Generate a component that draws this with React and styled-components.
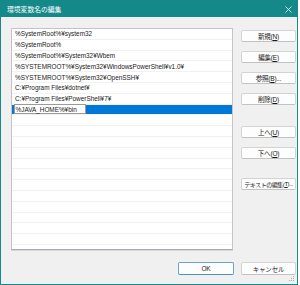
import React from 'react';
import styled, { createGlobalStyle } from 'styled-components';

const GlobalStyle = createGlobalStyle`
    html, body {
        margin: 0;
        padding: 0;
        background: #ffffff;
    }
    body {
        font-family: "Liberation Sans", "Noto Sans CJK JP", sans-serif;
    }
`;

const paths = [
    '%SystemRoot%¥system32',
    '%SystemRoot%',
    '%SystemRoot%¥System32¥Wbem',
    '%SYSTEMROOT%¥System32¥WindowsPowerShell¥v1.0¥',
    '%SYSTEMROOT%¥System32¥OpenSSH¥',
    'C:¥Program Files¥dotnet¥',
    'C:¥Program Files¥PowerShell¥7¥',
];

const sideButtons = [
    { label: '新規', key: 'N', gap: 0 },
    { label: '編集', key: 'E', gap: 9 },
    { label: '参照', key: 'B', gap: 9, dots: true },
    { label: '削除', key: 'D', gap: 9 },
    { label: '上へ', key: 'U', gap: 21 },
    { label: '下へ', key: 'O', gap: 9 },
    { label: 'テキストの編集', key: 'T', gap: 19, dots: true, tight: true },
];

const App = () => {
    const emptyRows = Array.from({ length: 13 });
    return (
        <>
            <GlobalStyle />
            <Window>
                <TitleBar>
                    <span className="title">環境変数名の編集</span>
                    <svg width="7" height="7" viewBox="0 0 7 7">
                        <path d="M0.5 0.5 L6.5 6.5 M6.5 0.5 L0.5 6.5" stroke="#d8eeee" strokeWidth="0.9" />
                    </svg>
                </TitleBar>
                <Body>
                    <Main>
                        <List>
                            {paths.map((p) => (
                                <Row key={p}>{p}</Row>
                            ))}
                            <Row $selected>
                                <EditBox>%JAVA_HOME%¥bin</EditBox>
                            </Row>
                            {emptyRows.map((_, i) => (
                                <Row key={i} />
                            ))}
                        </List>
                        <Side>
                            {sideButtons.map(({ label, key, gap, dots, tight }) => (
                                <Button key={key} $gap={gap} $tight={tight}>
                                    {label}(<u>{key}</u>){dots ? '...' : ''}
                                </Button>
                            ))}
                        </Side>
                    </Main>
                    <Footer>
                        <Button $primary $wide>OK</Button>
                        <Button>キャンセル</Button>
                    </Footer>
                </Body>
                <Grip viewBox="0 0 6 6">
                    <rect x="4" y="0" width="1" height="1" fill="#a9a9a9" />
                    <rect x="2" y="2" width="1" height="1" fill="#a9a9a9" />
                    <rect x="4" y="2" width="1" height="1" fill="#a9a9a9" />
                    <rect x="0" y="4" width="1" height="1" fill="#a9a9a9" />
                    <rect x="2" y="4" width="1" height="1" fill="#a9a9a9" />
                    <rect x="4" y="4" width="1" height="1" fill="#a9a9a9" />
                </Grip>
            </Window>
        </>
    );
};

export default App;

const Window = styled.div`
    position: relative;
    width: 298px;
    height: 285px;
    box-sizing: border-box;
    display: flex;
    flex-direction: column;
    border: 1px solid #15898a;
    border-top: none;
    background: #f0f0f0;
`;

const TitleBar = styled.div`
    height: 17px;
    margin: 0 -1px;
    padding: 0 6px 0 7px;
    background: #15898a;
    display: flex;
    align-items: center;
    justify-content: space-between;
    .title {
        color: #ffffff;
        font-family: "Noto Sans CJK JP", sans-serif;
        font-size: 6.8px;
        line-height: 1;
        padding-top: 1px;
    }
    svg {
        display: block;
        margin-top: 1px;
    }
`;

const Body = styled.div`
    flex: 1;
    display: flex;
    flex-direction: column;
    padding: 11px 1px 0 10px;
`;

const Main = styled.div`
    display: flex;
    gap: 8px;
    height: 222px;
`;

const List = styled.div`
    width: 222px;
    box-sizing: border-box;
    background: #ffffff;
    border: 1px solid #c4c4c4;
    border-bottom-color: #a9a9b4;
    box-shadow: 0 1px 0 #d6d6dc;
    overflow: hidden;
    display: flex;
    flex-direction: column;
`;

const Row = styled.div`
    flex: 0 0 10.8px;
    height: 10.8px;
    box-sizing: border-box;
    border-bottom: 1px solid #f1f1f1;
    padding-left: 3px;
    display: flex;
    align-items: center;
    font-size: 6.4px;
    color: #1a1a1a;
    white-space: nowrap;
    background: ${({ $selected }) => ($selected ? '#0078d7' : '#ffffff')};
`;

const EditBox = styled.div`
    margin-left: -1px;
    width: 72px;
    height: 10px;
    box-sizing: border-box;
    background: #ffffff;
    border: 1px solid #9a9a9a;
    padding-left: 0.5px;
    display: flex;
    align-items: center;
    font-size: 6.4px;
    color: #1a1a1a;
`;

const Side = styled.div`
    width: 55px;
    display: flex;
    flex-direction: column;
    padding-top: 2px;
`;

const Button = styled.div`
    margin-top: ${({ $gap }) => ($gap ? `${$gap}px` : '0')};
    width: ${({ $wide }) => ($wide ? '56px' : '55px')};
    height: ${({ $gap }) => ($gap !== undefined ? '12px' : '13px')};
    box-sizing: border-box;
    border: 1px solid ${({ $primary }) => ($primary ? '#6aa3d8' : '#d3d3d3')};
    border-bottom-color: ${({ $primary }) => ($primary ? '#4f8fcc' : '#c2c2c2')};
    border-radius: 2px;
    background: #fdfdfd;
    display: flex;
    align-items: center;
    justify-content: center;
    font-family: "Liberation Sans", "Noto Sans CJK JP", sans-serif;
    font-size: ${({ $tight }) => ($tight ? '6px' : '6.5px')};
    letter-spacing: ${({ $tight }) => ($tight ? '-0.45px' : '-0.2px')};
    color: #1a1a1a;
    white-space: nowrap;
    overflow: hidden;
    u {
        text-underline-offset: 1px;
    }
`;

const Footer = styled.div`
    display: flex;
    justify-content: flex-end;
    gap: 7px;
    margin-top: 12px;
`;

const Grip = styled.svg`
    position: absolute;
    right: 2px;
    bottom: 2px;
    width: 6px;
    height: 6px;
`;
